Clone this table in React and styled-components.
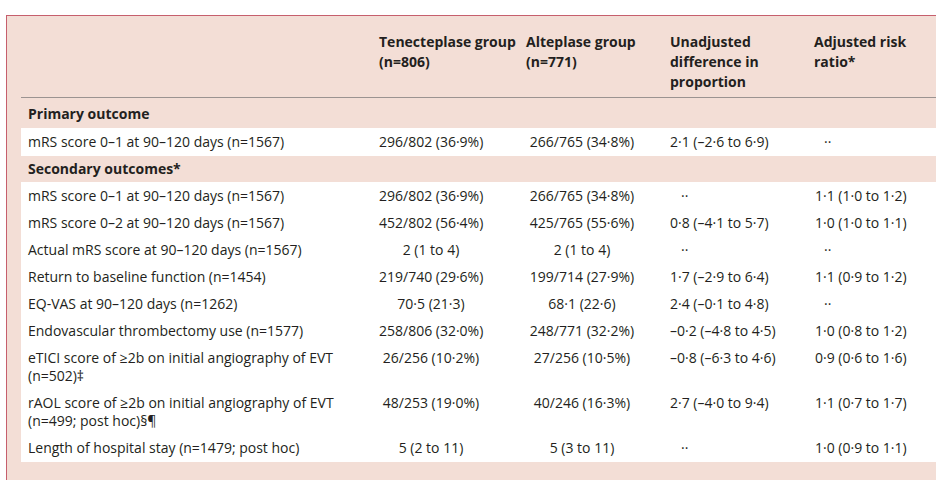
import React from "react";
import styled, { createGlobalStyle } from "styled-components";

const GlobalStyle = createGlobalStyle`
  html, body {
    margin: 0;
    background: #ffffff;
  }
  body {
    font-family: "Open Sans", "Liberation Sans", sans-serif;
    color: #231f20;
  }
`;

const headers = [
  [],
  ["Tenecteplase group", "(n=806)"],
  ["Alteplase group", "(n=771)"],
  ["Unadjusted", "difference in", "proportion"],
  ["Adjusted risk", "ratio*"]
];

const DOTS = "··";

const sections = [
  {
    title: "Primary outcome",
    rows: [
      {
        label: ["mRS score 0–1 at 90–120 days (n=1567)"],
        ten: "296/802 (36·9%)",
        alt: "266/765 (34·8%)",
        diff: "2·1 (–2·6 to 6·9)",
        ratio: DOTS
      }
    ]
  },
  {
    title: "Secondary outcomes*",
    rows: [
      {
        label: ["mRS score 0–1 at 90–120 days (n=1567)"],
        ten: "296/802 (36·9%)",
        alt: "266/765 (34·8%)",
        diff: DOTS,
        ratio: "1·1 (1·0 to 1·2)"
      },
      {
        label: ["mRS score 0–2 at 90–120 days (n=1567)"],
        ten: "452/802 (56·4%)",
        alt: "425/765 (55·6%)",
        diff: "0·8 (–4·1 to 5·7)",
        ratio: "1·0 (1·0 to 1·1)"
      },
      {
        label: ["Actual mRS score at 90–120 days (n=1567)"],
        ten: "2 (1 to 4)",
        alt: "2 (1 to 4)",
        diff: DOTS,
        ratio: DOTS
      },
      {
        label: ["Return to baseline function (n=1454)"],
        ten: "219/740 (29·6%)",
        alt: "199/714 (27·9%)",
        diff: "1·7 (–2·9 to 6·4)",
        ratio: "1·1 (0·9 to 1·2)"
      },
      {
        label: ["EQ-VAS at 90–120 days (n=1262)"],
        ten: "70·5 (21·3)",
        alt: "68·1 (22·6)",
        diff: "2·4 (–0·1 to 4·8)",
        ratio: DOTS
      },
      {
        label: ["Endovascular thrombectomy use (n=1577)"],
        ten: "258/806 (32·0%)",
        alt: "248/771 (32·2%)",
        diff: "–0·2 (–4·8 to 4·5)",
        ratio: "1·0 (0·8 to 1·2)"
      },
      {
        label: ["eTICI score of ≥2b on initial angiography of EVT", "(n=502)‡"],
        ten: "26/256 (10·2%)",
        alt: "27/256 (10·5%)",
        diff: "–0·8 (–6·3 to 4·6)",
        ratio: "0·9 (0·6 to 1·6)"
      },
      {
        label: ["rAOL score of ≥2b on initial angiography of EVT", "(n=499; post hoc)§¶"],
        ten: "48/253 (19·0%)",
        alt: "40/246 (16·3%)",
        diff: "2·7 (–4·0 to 9·4)",
        ratio: "1·1 (0·7 to 1·7)"
      },
      {
        label: ["Length of hospital stay (n=1479; post hoc)"],
        ten: "5 (2 to 11)",
        alt: "5 (3 to 11)",
        diff: DOTS,
        ratio: "1·0 (0·9 to 1·1)"
      }
    ]
  }
];

const App = () => {
  return (
    <>
      <GlobalStyle />
      <Page>
        <Panel>
          <Table>
            <HeadRow>
              {headers.map((lines, i) => (
                <HeadCell key={i}>
                  {lines.map((line) => (
                    <Line key={line}>{line}</Line>
                  ))}
                </HeadCell>
              ))}
            </HeadRow>

            {sections.map((section, s) => (
              <React.Fragment key={section.title}>
                <SectionRow $first={s === 0}>{section.title}</SectionRow>
                <Body>
                  {section.rows.map((row, i) => (
                    <Row key={`${section.title}-${i}`}>
                      <Label>
                        {row.label.map((line) => (
                          <Line key={line}>{line}</Line>
                        ))}
                      </Label>
                      <GroupCell>{row.ten}</GroupCell>
                      <AltCell>{row.alt}</AltCell>
                      <StatCell $empty={row.diff === DOTS}>{row.diff}</StatCell>
                      <RatioCell $empty={row.ratio === DOTS}>{row.ratio}</RatioCell>
                    </Row>
                  ))}
                </Body>
              </React.Fragment>
            ))}
          </Table>
        </Panel>
      </Page>
    </>
  );
};

const columns = "351px 147px 144px 144px 1fr";

const Page = styled.div`
  min-height: 100vh;
  box-sizing: border-box;
  padding: 15px 0 0 6px;
  display: flex;
`;

const Panel = styled.div`
  flex: 1;
  background: #f3ded6;
  border-top: 1px solid #c65f6d;
  border-left: 1px solid #c65f6d;
  padding: 0 0 0 14px;
`;

const Table = styled.div`
  font-size: 14px;
`;

const HeadRow = styled.div`
  display: grid;
  grid-template-columns: ${columns};
  border-bottom: 1px solid #9b9391;
  padding: 16px 0 5px;
`;

const HeadCell = styled.div`
  font-weight: 700;
  line-height: 20px;
  padding-left: 7px;
`;

const Line = styled.span`
  display: block;
  white-space: nowrap;
`;

const SectionRow = styled.div`
  font-weight: 700;
  line-height: 18px;
  padding: ${(p) => (p.$first ? "7px 7px 5px" : "4px 7px 4px")};
`;

const Body = styled.div`
  background: #ffffff;
  padding-bottom: 1px;
`;

const Row = styled.div`
  display: grid;
  grid-template-columns: ${columns};
  line-height: 18px;
  padding: 5px 0 4px;
  white-space: nowrap;
`;

const Label = styled.div`
  padding-left: 7px;
`;

const GroupCell = styled.div`
  text-align: center;
  padding: 0 36px 0 7px;
`;

const AltCell = styled.div`
  text-align: center;
  padding: 0 25px 0 7px;
`;

const StatCell = styled.div`
  padding-left: ${(p) => (p.$empty ? "18px" : "7px")};
`;

const RatioCell = styled.div`
  padding-left: ${(p) => (p.$empty ? "17px" : "8px")};
`;

export default App;
